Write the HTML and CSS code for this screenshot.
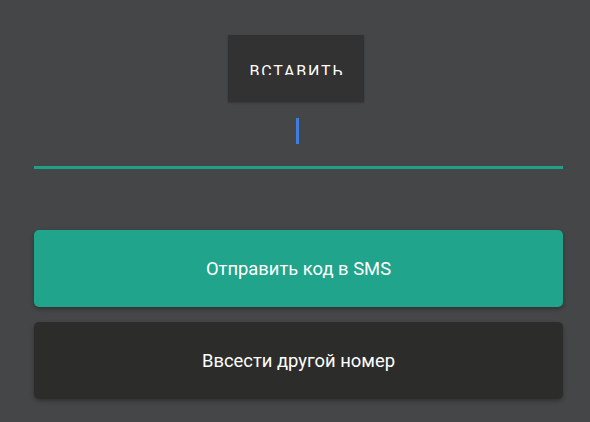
FILE: index.html
```html
<!DOCTYPE html>
<html lang="ru">
<head>
<meta charset="utf-8">
<link rel="stylesheet" href="styles.css">
</head>
<body>
<div class="page">
  <div class="paste-row">
    <div class="paste-popup">
      <div class="paste-clip"><span class="paste-label">Вставить</span></div>
    </div>
  </div>
  <div class="field">
    <div class="caret-row"><span class="caret"></span></div>
    <div class="underline"></div>
  </div>
  <button class="btn btn-primary">Отправить код в SMS</button>
  <button class="btn btn-dark">Ввсести другой номер</button>
</div>
</body>
</html>
```

FILE: styles.css
```css
html, body {
  margin: 0;
  padding: 0;
  background: #454648;
  width: 590px;
  height: 422px;
  overflow: hidden;
}
.page {
  padding: 35px 27px 0 34px;
  font-family: Roboto, "Noto Sans", sans-serif;
  display: flex;
  flex-direction: column;
}
.paste-row {
  display: flex;
  padding-left: 194px;
}
.paste-popup {
  width: 136px;
  height: 67px;
  background: #323232;
  box-shadow: 0 1px 2px rgba(0,0,0,0.25);
}
.paste-clip {
  padding-top: 29px;
  height: 11px;
  overflow: hidden;
  text-align: center;
}
.paste-label {
  display: block;
  color: #ffffff;
  font-size: 16px;
  line-height: 16px;
  text-transform: uppercase;
  letter-spacing: 1.8px;
  padding-left: 2px;
}
.field {
  display: flex;
  flex-direction: column;
}
.caret-row {
  display: flex;
  padding-left: 262px;
  margin-top: 16px;
}
.caret {
  width: 3px;
  height: 26px;
  background: #3d7fe0;
}
.underline {
  margin-top: 22px;
  height: 3px;
  background: #1fa088;
}
.btn {
  display: flex;
  align-items: center;
  justify-content: center;
  height: 77px;
  border: none;
  border-radius: 5px;
  color: #ffffff;
  font-family: Roboto, "Noto Sans", sans-serif;
  font-size: 18.4px;
  padding: 0;
  box-shadow: 0 2px 4px rgba(0,0,0,0.3);
}
.btn-primary {
  margin-top: 61px;
  background: #20a48b;
}
.btn-dark {
  margin-top: 15px;
  background: #2c2d2b;
}
```
